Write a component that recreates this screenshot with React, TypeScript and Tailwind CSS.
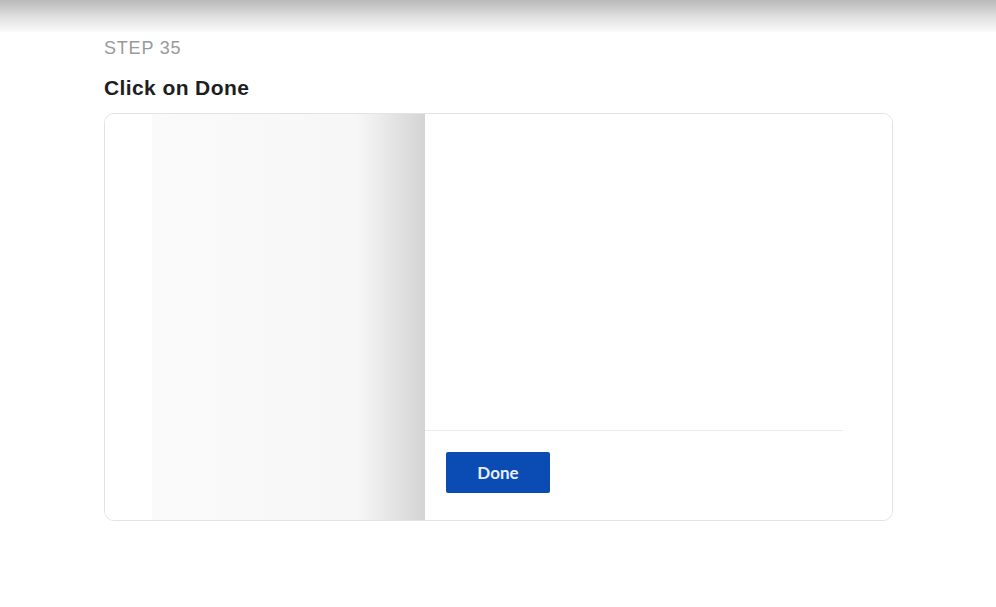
export default function App() {
  return (
    <div className="w-[996px] h-[607px] bg-white relative overflow-hidden font-['Liberation_Sans',Arial,sans-serif]">
      <div className="h-[32px] bg-gradient-to-b from-[#b9b9b9] via-[#dedede] to-[#fbfbfb]" />
      <div className="pl-[104px] pr-[103px]">
        <div className="mt-[6px] text-[18px] leading-[20px] text-[#9a9a9a] tracking-[0.8px]">STEP 35</div>
        <h1 className="mt-[18px] text-[21px] leading-[24px] font-bold text-[#1e1e1e] tracking-[0.4px]">Click on Done</h1>
        <div className="mt-[13px] h-[408px] border border-[#e3e3e3] rounded-[10px] overflow-hidden flex">
          <div className="w-[47px] bg-white" />
          <div className="w-[273px] bg-gradient-to-r from-[#fafafa] via-[#f7f7f7] via-75% to-[#d4d4d4]" />
          <div className="flex-1 flex flex-col bg-white">
            <div className="flex-1" />
            <div className="mr-[49px] border-t border-[#ececec]" />
            <div className="h-[89px] pl-[21px] pt-[21px]">
              <button className="w-[104px] h-[41px] rounded-[2px] bg-[#0a4cb4] text-[#e8eefa] text-[17px] font-bold font-['Lato',sans-serif]">
                Done
              </button>
            </div>
          </div>
        </div>
      </div>
    </div>
  );
}
